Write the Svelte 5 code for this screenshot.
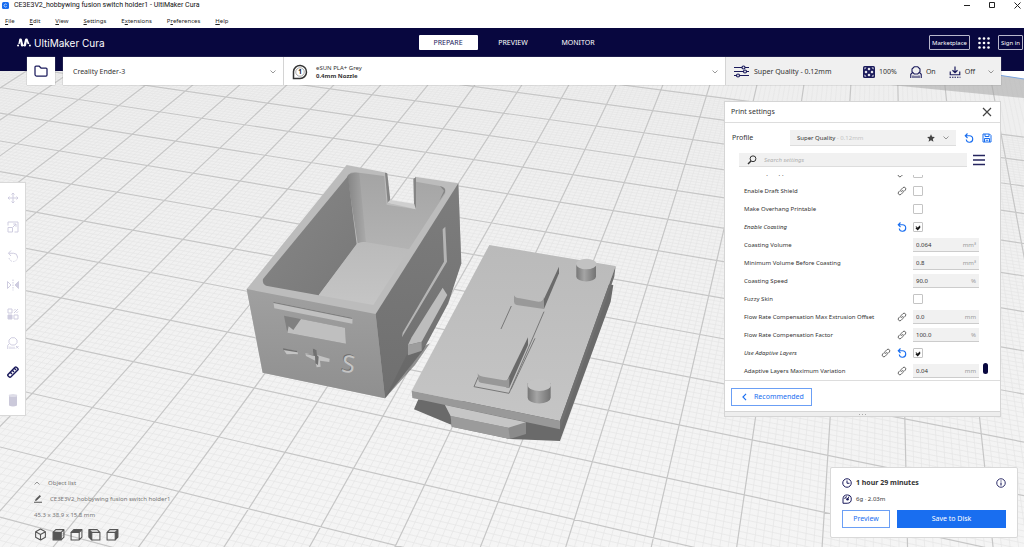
<script>
  const menus = ['File', 'Edit', 'View', 'Settings', 'Extensions', 'Preferences', 'Help'];
  const marks = [0, 0, 0, 0, 1, 1, 0];
  const stages = ['PREPARE', 'PREVIEW', 'MONITOR'];
  let stage = $state('PREPARE');

  let settings = $state([
    { label: 'Break Up Support In Chunks', type: 'check', value: false, link: true },
    { label: 'Enable Draft Shield', type: 'check', value: false, link: true },
    { label: 'Make Overhang Printable', type: 'check', value: false },
    { label: 'Enable Coasting', type: 'check', value: true, changed: true },
    { label: 'Coasting Volume', type: 'num', value: '0.064', unit: 'mm³' },
    { label: 'Minimum Volume Before Coasting', type: 'num', value: '0.8', unit: 'mm³' },
    { label: 'Coasting Speed', type: 'num', value: '90.0', unit: '%' },
    { label: 'Fuzzy Skin', type: 'check', value: false },
    { label: 'Flow Rate Compensation Max Extrusion Offset', type: 'num', value: '0.0', unit: 'mm', link: true },
    { label: 'Flow Rate Compensation Factor', type: 'num', value: '100.0', unit: '%', link: true },
    { label: 'Use Adaptive Layers', type: 'check', value: true, changed: true, link: true },
    { label: 'Adaptive Layers Maximum Variation', type: 'num', value: '0.04', unit: 'mm', link: true }
  ]);

  // Build plate grid: two pencils of lines that meet on the same horizon.
  const horizon = -480;
  const vpAcross = -3726;
  const vpDeep = 886;
  function across(n) {
    const k = 1 / (0.0012975 - 0.0000754 * (n - 3)) / (26 - vpAcross);
    return `M0 ${(horizon - k * vpAcross).toFixed(1)}L1024 ${(horizon + k * (1024 - vpAcross)).toFixed(1)}`;
  }
  function deep(m) {
    const k = 0.021 + 0.0832 * m;
    return `M${(vpDeep + 540 * k).toFixed(1)} 60L${(vpDeep + 1040 * k).toFixed(1)} 560`;
  }
  let major = '';
  let minor = '';
  for (let i = -70; i <= 90; i++) {
    if (i % 10 === 0) major += across(i / 10);
    else minor += across(i / 10);
  }
  for (let i = -200; i <= 30; i++) {
    if (i % 10 === 0) major += deep(i / 10);
    else minor += deep(i / 10);
  }
</script>

{#snippet linkIcon()}
  <svg class="i10" viewBox="0 0 20 20" fill="none" stroke="#555" stroke-width="1.8" stroke-linecap="round">
    <path d="M8.5 11.5a3.4 3.4 0 0 1 0-4.8l3.4-3.4a3.4 3.4 0 0 1 4.8 4.8l-2.2 2.2M11.5 8.5a3.4 3.4 0 0 1 0 4.8l-3.4 3.4a3.4 3.4 0 0 1-4.8-4.8l2.2-2.2" />
  </svg>
{/snippet}
{#snippet resetIcon()}
  <svg class="i10" viewBox="0 0 20 20" fill="none" stroke="#196ef0" stroke-width="2.2">
    <path d="M2.500 5.500H11a6.500 6.500 0 1 1-6.500 7.500M7 1L2.500 5.500 7 10" />
  </svg>
{/snippet}
{#snippet chevron()}
  <svg class="chev" viewBox="0 0 12 8" fill="none" stroke="#777" stroke-width="1.5"><path d="M1 1l5 5 5-5" /></svg>
{/snippet}

<div class="app">
  <div class="titlebar">
    <svg class="i7" viewBox="0 0 14 14"><rect width="14" height="14" rx="3" fill="#196ef0" /><path d="M9.500 5A3 3 0 1 0 9.500 9" fill="none" stroke="#fff" stroke-width="1.300" /></svg>
    <h1>CE3E3V2_hobbywing fusion switch holder1 - UltiMaker Cura</h1>
    <div class="winbtns">
      <button aria-label="Minimize"><svg viewBox="0 0 7 7"><path d="M0 3.500h6" /></svg></button>
      <button aria-label="Maximize"><svg viewBox="0 0 7 7"><path d="M.5 .5h5v5h-5z" /></svg></button>
      <button aria-label="Close"><svg viewBox="0 0 7 7"><path d="M.5.5l6 6M6.500.5l-6 6" /></svg></button>
    </div>
  </div>
  <nav class="menubar">
    {#each menus as m, i}
      <button>{m.slice(0, marks[i])}<u>{m[marks[i]]}</u>{m.slice(marks[i] + 1)}</button>
    {/each}
  </nav>

  <header>
    <div class="logo">
      <svg viewBox="0 0 26 16" fill="#fff"><circle cx="2" cy="13.500" r="1.900" /><circle cx="24" cy="13.500" r="1.900" /><path d="M4 2.500q0-2 2-2h1q1.600 0 2 1.600L11.500 12h1L15 2.100Q15.400.5 17 .5h1q2 0 2 2L23 11h-3.500L18.300 6l-1.500 7.500q-.4 2-2.300 2h-.5q-1.500 0-2-1.500-.5 1.500-2 1.500h-.5q-1.900 0-2.300-2L6 6 5 11H2.500z" /></svg>
      <span>UltiMaker Cura</span>
    </div>
    <nav class="stages">
      {#each stages as s}
        <button class:active={stage === s} onclick={() => (stage = s)}>{s}</button>
      {/each}
    </nav>
    <div class="account">
      <button class="outlined">Marketplace</button>
      <button class="apps" aria-label="Applications">
        <svg viewBox="0 0 24 24" fill="#fff">
          {#each [3, 12, 21] as y}{#each [3, 12, 21] as x}<circle cx={x} cy={y} r="2.600" />{/each}{/each}
        </svg>
      </button>
      <button class="outlined">Sign in</button>
    </div>
  </header>

  <div class="stage">
    <svg class="scene" viewBox="0 71 1024 476" preserveAspectRatio="xMidYMid slice" aria-hidden="true">
      <defs>
        <linearGradient id="plate" x1="0" y1="0" x2="0" y2="1"><stop offset="0" stop-color="#eeeeee" /><stop offset="1" stop-color="#f5f5f5" /></linearGradient>
        <linearGradient id="front" x1="0" y1="0" x2="0" y2="1"><stop offset="0" stop-color="#a0a0a0" /><stop offset="1" stop-color="#8f8f8f" /></linearGradient>
        <linearGradient id="wall" x1="0" y1="0" x2="1" y2="1"><stop offset="0" stop-color="#888" /><stop offset="1" stop-color="#787878" /></linearGradient>
        <linearGradient id="side" x1="0" y1="0" x2="0" y2="1"><stop offset="0" stop-color="#7d7d7d" /><stop offset="1" stop-color="#6f6f6f" /></linearGradient>
        <linearGradient id="back" x1="0" y1="0" x2="0" y2="1"><stop offset="0" stop-color="#a4a4a4" /><stop offset="1" stop-color="#b3b3b3" /></linearGradient>
        <linearGradient id="floor" x1="0" y1="0" x2="0" y2="1"><stop offset="0" stop-color="#bababa" /><stop offset="1" stop-color="#c5c5c5" /></linearGradient>
        <linearGradient id="corner" x1="0" y1="0" x2="1" y2="0"><stop offset="0" stop-color="#858585" /><stop offset="1" stop-color="#aaaaaa" /></linearGradient>
        <linearGradient id="peg" x1="0" y1="0" x2="1" y2="0"><stop offset="0" stop-color="#777" /><stop offset=".4" stop-color="#a5a5a5" /><stop offset="1" stop-color="#727272" /></linearGradient>
      </defs>
      <rect y="60" width="1024" height="500" fill="url(#plate)" />
      <path d={minor} stroke="#e5e5e5" stroke-width=".7" fill="none" />
      <path d={major} stroke="#c6c6c6" stroke-width="1.200" fill="none" />
      <path d="M880 60V84L1024 98V60z" fill="#a6a6a6" opacity=".55" />
      <path d="M900 60L1024 79V60z" fill="#fff" />
      <path d="M900 60L1024 79" stroke="#7aa5e0" stroke-width="1" />

      <!-- open box -->
      <g transform="translate(230 150) scale(.3333)">
        <path d="M350 45L470 68 475 158 556 170 555 80 685 100 694 340 650 465 575 602 465 745 98 668 50 417z" fill="#bcbcbc" />
        <path d="M355 74Q362 66 375 67L463 78 470 164 558 178 558 95 630 108Q646 112 646 130L537 298 383 276z" fill="url(#back)" />
        <path d="M352 78Q362 66 388 69L408 276 383 280z" fill="url(#corner)" />
        <path d="M630 108Q650 112 645 127L628 152 642 122z" fill="#858585" />
        <path d="M354 78L380 282 266 436 108 407Q96 402 99 387z" fill="url(#wall)" />
        <path d="M380 284Q388 274 405 276L537 298 430 465 266 436z" fill="url(#floor)" />
        <path d="M465 68L472 70 481 150 473 158z" fill="#858585" />
        <path d="M473 158L481 150 556 162 558 178z" fill="#cfcfcf" />
        <path d="M550 86L558 82 558 178 552 160z" fill="#858585" />
        <path d="M50 417L437 492 465 745 98 668z" fill="url(#front)" />
        <path d="M685 100L694 340 655 460 580 600 465 745 437 492z" fill="url(#side)" />
        <path d="M530 615L600 580 555 645 465 745z" fill="#666" opacity=".7" />
        <path d="M638 238L646 230 651 335 516 562 518 548 642 335z" fill="#b5b5b5" />
        <path d="M638 413L652 435 648 468 575 602 538 615 534 585z" fill="#747474" />
        <path d="M638 413L652 435 575 575 534 585 545 562z" fill="#bdbdbd" />
        <path d="M534 585L575 575 575 602 534 616z" fill="#9d9d9d" />
        <path d="M130 455L368 503 367 521 133 475z" fill="#c0c0c0" /><path d="M130 455L368 503 367 507 130 459z" fill="#808080" />
        <path d="M162 497L345 533 348 581 172 548z" fill="#808080" />
        <path d="M213 507L345 533 348 581 172 548 176 529 190 540z" fill="#bfbfbf" />
        <path d="M159 596L202 604 204 613 190 612 170 613z" fill="#c4c4c4" /><path d="M159 595L202 603 202 607 160 600z" fill="#707070" />
        <path d="M248 595L260 600 261 615 299 626 298 636 270 632 272 650 260 652 256 632 228 618 226 610 250 614z" fill="#c2c2c2" />
        <path d="M248 595L260 600 261 616 266 620 264 645 256 640 255 618 226 612 250 614z" fill="#717171" />
        <text x="333" y="664" transform="rotate(8 350 640)" font-family="Noto Sans, sans-serif" font-size="72" fill="#6d6d6d">S</text>
        <text x="336" y="667" transform="rotate(8 350 640)" font-family="Noto Sans, sans-serif" font-size="72" fill="#c4c4c4">S</text>
      </g>

      <!-- lid -->
      <g transform="translate(400 230) scale(.3333)">
        <path d="M55 508L42 538 150 583 330 627 480 633 632 215 640 165 600 160 400 520z" fill="#6a6a6a" />
        <path d="M268 45L647 108 480 573 35 482z" fill="url(#floor)" />
        <path d="M35 482L480 573 480 598 37 504z" fill="#999" />
        <path d="M647 108L643 140 480 598 480 573z" fill="#707070" />
        <path d="M135 525L378 576 378 612 330 627 155 590 152 558z" fill="#8b8b8b" />
        <path d="M135 525L377 577 325 593 152 558z" fill="#c6c6c6" />
        <path d="M152 558L325 593 330 627 155 590z" fill="#9b9b9b" />
        <path d="M477 110L477 130 432 237 428 215z" fill="#6a6a6a" />
        <path d="M342 196Q346 205 360 205L415 215Q430 216 432 200L432 237 350 225Q342 222 342 215z" fill="#999" />
        <path d="M334 228L303 297M432 245L327 490 222 470 236 438M405 325L333 478" stroke="#777" stroke-width="3" fill="none" />
        <path d="M384 322L384 345 328 473 318 472 322 450z" fill="#696969" />
        <path d="M233 430Q238 440 250 440L312 451Q325 452 328 440L328 473 242 458Q235 456 235 450z" fill="#989898" />
        <path d="M529 103V140A29 14 0 0 0 588 140V103z" fill="url(#peg)" /><ellipse cx="559" cy="102" rx="31" ry="16" fill="#c2c2c2" />
        <path d="M383 460V503A34 17 0 0 0 452 503V460z" fill="url(#peg)" /><ellipse cx="418" cy="465" rx="35" ry="18" fill="#c4c4c4" />
      </g>
    </svg>

    <div class="stagebar">
      <button class="open" aria-label="Open file">
        <svg viewBox="0 0 28 24" fill="none" stroke="#1b1b5c" stroke-width="2.500" stroke-linejoin="round"><path d="M2 19V4q0-2 2-2h6l4 4h10q2 0 2 2v12q0 2-2 2H5q-3 0-3-3z" /></svg>
      </button>
      <div class="config">
        <button class="machine"><span>Creality Ender-3</span>{@render chevron()}</button>
        <button class="material">
          <svg class="i16" viewBox="0 0 32 32"><path d="M3 29V15A13 13 0 1 1 16 29z" fill="none" stroke="#333" stroke-width="3" /><circle cx="16" cy="16" r="8.500" fill="#fff" stroke="#555" stroke-width="1" /><text x="16" y="20.500" text-anchor="middle" font-size="13" font-weight="700" font-family="Noto Sans, sans-serif" fill="#222">1</text></svg>
          <span class="two"><span>eSUN PLA+ Grey</span><b>0.4mm Nozzle</b></span>
          {@render chevron()}
        </button>
        <button class="quality">
          <svg class="i15" viewBox="0 0 30 26" fill="none" stroke="#1b1b5c" stroke-width="2.400"><path d="M0 5h16M22 5h8M0 13h19M25 13h5M0 21h5M11 21h19" /><circle cx="19" cy="5" r="3" /><circle cx="22" cy="13" r="3" /><circle cx="8" cy="21" r="3" /></svg>
          <span class="grow">Super Quality - 0.12mm</span>
          <span class="stat">
            <svg class="i12" viewBox="0 0 24 24"><rect width="24" height="24" rx="3" fill="#1b1b5c" /><path d="M12 3l3 3-3 3-3-3zM12 15l3 3-3 3-3-3zM3 12l3-3 3 3-3 3zM15 12l3-3 3 3-3 3zM3 3h4L3 7zM21 3v4l-4-4zM3 21v-4l4 4zM21 21h-4l4-4z" fill="#fff" /></svg>100%</span>
          <span class="stat">
            <svg class="i12" viewBox="0 0 24 24" fill="none" stroke="#1b1b5c" stroke-width="2.200"><path d="M8.500 1.500h7l4.500 4.500v5.500L15.500 16h-7L4 11.500V6zM1.500 24v-7.500L5 13M22.500 24v-7.500L19 13M6 24v-5M10 24v-4.500M14 24v-4.500M18 24v-5" /></svg>On</span>
          <span class="stat">
            <svg class="i12" viewBox="0 0 24 24" fill="none" stroke="#1b1b5c" stroke-width="2.400"><path d="M12 1v12M7 8.500l5 5 5-5M2.500 11v6.500h19V11" /><path d="M1 22.500h22" stroke-dasharray="3 2" stroke-width="2" /></svg>Off</span>
          {@render chevron()}
        </button>
      </div>
    </div>

    <main>
      <div class="left">
        <div class="tools">
          <button aria-label="Move"><svg viewBox="0 0 24 24"><path d="M12 2v20M2 12h20M9 5l3-3 3 3M9 19l3 3 3-3M5 9l-3 3 3 3M19 9l3 3-3 3" /></svg></button>
          <button aria-label="Scale"><svg viewBox="0 0 24 24"><path d="M2 9V2h20v20h-7M2 13h9v9H2zM12 12l6-6M12.500 6H18v5.500" /></svg></button>
          <button aria-label="Rotate"><svg viewBox="0 0 24 24"><path d="M8 1L3 6.500 8 12M3 6.500h10a8 8 0 0 1 8 7.500" /><path d="M21 14A8.500 8.500 0 0 1 4 15" stroke-dasharray="3 2.500" /></svg></button>
          <button aria-label="Mirror"><svg viewBox="0 0 24 24"><path d="M1 5v14l7-7z" /><path d="M23 5v14l-7-7z" fill="#cfcde0" /><path d="M12 1v22" stroke-dasharray="3 2" /></svg></button>
          <button aria-label="Per model settings"><svg viewBox="0 0 24 24"><path d="M2 2h8v8H2zM14 14h8v8h-8z" /><path d="M2 14h8v8H2z" fill="#cfcde0" /><path d="M14 10l8-8M14 5l3-3M19 10l3-3" /></svg></button>
          <button aria-label="Support blocker"><svg viewBox="0 0 24 24"><path d="M8.500 1.500h7l4.500 4.500v5.500L15.500 16h-7L4 11.500V6zM1.500 24v-7.500L5 13M6 24v-5M10 24v-4.500M14 24v-4.500M18 18l5 5M23 18l-5 5" /></svg></button>
          <button aria-label="Measure" class="on"><svg viewBox="0 0 24 24"><path d="M2 17L16 2.500q1.500-1 3 0l2.500 2.500q1.500 1.500 0 3L7.500 22q-1.500 1-3 0L2 19.500q-1-1.300 0-2.500zM7 13l3 3M11 9l3 3M15 5l3 3" /></svg></button>
          <button aria-label="Cylinder"><svg viewBox="0 0 24 30"><path d="M4 5v20q8 4 16 0V5z" fill="#cbc9da" /><ellipse cx="12" cy="5" rx="8.500" ry="3" fill="#dedde8" /></svg></button>
        </div>
        <div class="objects">
          <button class="objlist"><svg class="chev" viewBox="0 0 12 8" fill="none" stroke="#777" stroke-width="1.500"><path d="M1 7l5-5 5 5" /></svg>Object list</button>
          <button class="objname"><svg class="i8" viewBox="0 0 16 16" fill="#555"><path d="M2 12l1-3.500L11.500 0l2.500 2.500L5.500 11zM0 13.500h16V15.500H0z" /></svg>CE3E3V2_hobbywing fusion switch holder1</button>
          <p>45.3 x 38.9 x 15.8 mm</p>
          <div class="views">
            <button aria-label="3D view"><svg viewBox="0 0 24 24"><path d="M12 2l9 5v10l-9 5-9-5V7zM3 7l9 5 9-5M12 12v10" /></svg></button>
            <button aria-label="Front view"><svg viewBox="0 0 24 24"><path d="M2 8l5-5h15v14l-5 5M17 8l5-5" /><path d="M2 8h15v14H2z" fill="#555" /></svg></button>
            <button aria-label="Top view"><svg viewBox="0 0 24 24"><path d="M2 8v14h15l5-5V3M17 8v14" /><path d="M2 8l5-5h15l-5 5z" fill="#555" /></svg></button>
            <button aria-label="Left view"><svg viewBox="0 0 24 24"><path d="M7 8h15v14H7L2 17V3h15l5 5" /><path d="M2 3l5 5v14l-5-5z" fill="#555" /></svg></button>
            <button aria-label="Right view"><svg viewBox="0 0 24 24"><path d="M17 8H2v14h15M2 8l5-5h15" /><path d="M17 8l5-5v14l-5 5z" fill="#555" /></svg></button>
          </div>
        </div>
      </div>

      <div class="right">
        <section class="panel">
          <div class="phead"><h2>Print settings</h2><button aria-label="Close settings"><svg class="i10" viewBox="0 0 10 10" stroke="#444" stroke-width="1.200"><path d="M1 1l8 8M9 1l-8 8" /></svg></button></div>
          <div class="profile">
            <span class="plabel">Profile</span>
            <button class="pick" aria-haspopup="listbox">
              <span>Super Quality <i>- 0.12mm</i></span>
              <svg class="i8" viewBox="0 0 16 16" fill="#444"><path d="M8 .5l2.300 5.100 5.500.5-4.200 3.700 1.300 5.500L8 12.400l-4.900 2.900 1.300-5.500L.2 6.100l5.500-.5z" /></svg>
              {@render chevron()}
            </button>
            <button aria-label="Discard changes">{@render resetIcon()}</button>
            <button aria-label="Save profile"><svg class="i10" viewBox="0 0 20 20" fill="none" stroke="#196ef0" stroke-width="2"><path d="M2 2h13l3 3v13H2zM6 2v5h8V2M5 18v-7h10v7M7.500 14.500h5" /></svg></button>
          </div>
          <div class="search">
            <label for="q" aria-label="Search settings"><svg class="i10" viewBox="0 0 20 20" fill="none" stroke="#333" stroke-width="2"><circle cx="12" cy="7.500" r="5.800" /><path d="M8 12l-6 6" stroke-width="2.800" /></svg></label>
            <input id="q" type="text" placeholder="Search settings" />
            <button aria-label="Setting visibility"><svg viewBox="0 0 12 12" stroke="#25255f" stroke-width="1.300"><path d="M0 1.500h12M0 6h12M0 10.500h12" /></svg></button>
          </div>
          <div class="listwrap">
            <div class="list">
              {#each settings as s, i}
                <div class="row">
                  <label for="s{i}" class:changed={s.changed}>{s.label}</label>
                  {#if s.link}{@render linkIcon()}{/if}
                  {#if s.changed}<button aria-label="Restore value">{@render resetIcon()}</button>{/if}
                  <span class="field">
                    {#if s.type === 'check'}
                      <input id="s{i}" type="checkbox" bind:checked={s.value} />
                    {:else}
                      <span class="num"><input id="s{i}" type="text" bind:value={s.value} /><em>{s.unit}</em></span>
                    {/if}
                  </span>
                </div>
              {/each}
            </div>
            <span class="thumb"></span>
          </div>
          <div class="pfoot">
            <button class="rec"><svg viewBox="0 0 8 12" fill="none" stroke="#196ef0" stroke-width="1.800"><path d="M6.500 1L1.500 6l5 5" /></svg>Recommended</button>
          </div>
          <div class="grip"><i></i><i></i><i></i></div>
        </section>

        <section class="job">
          <div class="line"><svg class="i10" viewBox="0 0 20 20" fill="none" stroke="#1b1b5c" stroke-width="2"><circle cx="10" cy="10" r="8.500" /><path d="M10 5v5.500h5" /></svg><b>1 hour 29 minutes</b>
            <button aria-label="Print time details"><svg class="i10" viewBox="0 0 20 20" fill="none" stroke="#1b1b5c" stroke-width="1.800"><circle cx="10" cy="10" r="8.500" /><path d="M10 9v6M10 5v2" stroke-width="2.200" /></svg></button></div>
          <div class="line small"><svg class="i10" viewBox="0 0 20 20" fill="none" stroke="#1b1b5c" stroke-width="2"><path d="M2 18.500V10a8.300 8.300 0 1 1 8.300 8.500zM10 5.500a4.500 4.500 0 0 0-4.500 4.500" /><circle cx="11" cy="10.500" r="2.500" fill="#1b1b5c" stroke="none" /><path d="M11 10l3-5" /></svg><span>6g · 2.03m</span></div>
          <div class="actions"><button class="prev">Preview</button><button class="save">Save to Disk</button></div>
        </section>
      </div>
    </main>
  </div>
</div>

<style>
  :global(body) { margin: 0; }
  .app { min-height: 100vh; display: flex; flex-direction: column; font: 6px/8px 'Noto Sans', 'Open Sans', sans-serif; color: #333; background: #fff; overflow: hidden; }
  button { font: inherit; color: inherit; background: none; border: 0; padding: 0; display: flex; align-items: center; }
  input { font: inherit; color: inherit; }
  h1, h2, p { margin: 0; font: inherit; }
  svg { display: block; flex: none; }
  .i7 { width: 7px; height: 7px; }
  .i8 { width: 8px; height: 8px; }
  .i10 { width: 10px; height: 10px; }
  .i12 { width: 12px; height: 12px; }
  .i15 { width: 15px; height: 13px; }
  .i16 { width: 16px; height: 16px; }
  .chev { width: 6px; height: 4px; }

  .titlebar { display: flex; align-items: center; height: 10px; padding-left: 2px; gap: 5px; color: #111; }
  .titlebar h1 { font: 7px/10px Roboto, sans-serif; }
  .winbtns { margin-left: auto; display: flex; gap: 18px; padding-right: 3px; }
  .winbtns svg { width: 7px; height: 7px; fill: none; stroke: #222; stroke-width: 1; }
  .menubar { display: flex; align-items: center; gap: 15px; height: 14px; padding: 4px 5px 0; color: #222; }

  header { background: #08073f; color: #fff; height: 29px; padding-bottom: 14px; display: grid; grid-template-columns: 1fr auto 1fr; align-items: center; }
  .logo { display: flex; align-items: center; gap: 3px; padding-left: 17px; font: 10px/14px Inter, sans-serif; }
  .logo svg { width: 14px; height: 9px; }
  .stages { display: flex; gap: 6px; padding-left: 2px; font-size: 7px; }
  .stages button { width: 59px; height: 15px; justify-content: center; border-radius: 1px; }
  .stages .active { background: #fff; color: #1b1b5c; }
  .account { display: flex; justify-content: flex-end; align-items: center; gap: 8px; padding-right: 1px; }
  .outlined { border: 1px solid #b8b7cc; height: 15px; padding: 0 2px; border-radius: 1px; }
  .apps svg { width: 12px; height: 12px; }

  .stage { position: relative; flex: 1; display: flex; flex-direction: column; }
  .scene { position: absolute; inset: 0; width: 100%; height: 100%; }
  .stagebar { position: relative; display: flex; gap: 8px; margin: -14px 23px 0 27px; height: 28px; font-size: 7px; }
  .open { width: 28px; background: #fff; justify-content: center; box-shadow: 0 0 1px #888; }
  .open svg { width: 14px; height: 12px; }
  .config { flex: 1; display: grid; grid-template-columns: 220fr 442fr 276fr; background: #fff; box-shadow: 0 0 1px #888; }
  .config > button { padding: 1px 7px 0 10px; text-align: left; }
  .machine span, .two, .grow { flex: 1; }
  .config .material { border-left: 1px solid #d4d4d4; gap: 8px; padding-left: 8px; font-size: 6px; }
  .two { display: flex; flex-direction: column; }
  .config .quality { background: #f0f0f0; border-left: 1px solid #d4d4d4; gap: 5px; padding-left: 8px; }
  .stat { display: flex; align-items: center; gap: 4px; margin-right: 8px; }

  main { position: relative; flex: 1; display: flex; justify-content: space-between; }
  .left, .right { display: flex; flex-direction: column; justify-content: space-between; }
  .tools { margin-top: 97px; width: 25px; background: #fff; border: 1px solid #d9d9d9; border-left: 0; display: flex; flex-direction: column; align-items: center; }
  .tools button { height: 29px; }
  .tools svg { width: 12px; height: 12px; fill: none; stroke: #cfcde0; stroke-width: 2; }
  .tools button:last-child svg { height: 15px; stroke: none; }
  .tools .on svg { stroke: #1b1b5c; stroke-width: 3; }
  .objects { padding: 0 0 6px 34px; color: #777; display: flex; flex-direction: column; gap: 8px; }
  .objects button { gap: 8px; }
  .views { display: flex; }
  .views button { width: 18px; height: 14px; }
  .views svg { width: 13px; height: 13px; fill: none; stroke: #555; stroke-width: 2; stroke-linejoin: round; }

  .right { align-items: flex-end; padding: 16px 6px 9px 0; }
  .panel { width: 275px; margin-right: 17px; background: #fff; border: 1px solid #d5d5d5; }
  .phead { display: flex; justify-content: space-between; align-items: center; height: 20px; padding: 0 8px 0 6px; border-bottom: 1px solid #ddd; font-size: 7px; }
  .profile { display: flex; align-items: center; gap: 8px; padding: 7px 8px 0 7px; height: 16px; }
  .plabel { flex: 1; font-size: 7px; }
  .pick { width: 166px; height: 16px; box-sizing: border-box; background: #f1f1f1; border-bottom: 1px solid #ddd; padding: 0 7px; gap: 8px; }
  .pick span { flex: 1; text-align: left; }
  .pick i { font-style: normal; color: #c4c4c4; }
  .search { display: flex; align-items: center; margin: 7px 15px 0 14px; }
  .search label { background: #f1f1f1; height: 13px; width: 25px; border-bottom: 1px solid #ddd; display: flex; align-items: center; justify-content: center; }
  .search input { flex: 1; min-width: 0; box-sizing: border-box; height: 14px; border: 0; border-bottom: 1px solid #ddd; background: #f1f1f1; padding: 0; font-style: italic; outline: 0; }
  .search input::placeholder { color: #b0b0b0; }
  .search button { margin-left: 6px; }
  .search svg:not(.i10) { width: 12px; height: 12px; }
  .listwrap { position: relative; margin-top: 8px; }
  .list { height: 205px; overflow: hidden; display: flex; flex-direction: column; justify-content: flex-end; padding-right: 21px; }
  .row { flex: none; height: 18px; display: flex; align-items: center; gap: 6px; padding-left: 19px; }
  .row label { flex: 1; }
  .changed { font-style: italic; }
  .field { width: 66px; }
  .num { display: flex; align-items: center; height: 14px; box-sizing: border-box; background: #f1f1f1; border-bottom: 1px solid #ccc; padding: 0 3px; }
  .num input { flex: 1; min-width: 0; width: 20px; border: 0; background: none; padding: 0; outline: 0; }
  .num em { font-style: normal; color: #999; }
  input[type='checkbox'] { appearance: none; display: block; width: 10px; height: 10px; margin: 0; border: 1px solid #c4c4c4; border-radius: 1px; background: #fff; }
  input[type='checkbox']:checked::after { content: ''; display: block; width: 4px; height: 3px; margin: 2px 0 0 2px; border: solid #111; border-width: 0 0 1px 1px; box-sizing: border-box; transform: rotate(-45deg); box-shadow: -1px 1px 0 #111; }
  .thumb { position: absolute; right: 12px; bottom: 6px; width: 5px; height: 11px; border-radius: 3px; background: #08073f; }
  .pfoot { border-top: 1px solid #ddd; padding: 7px 6px 5px; }
  .rec { border: 1px solid #6b9ff5; color: #196ef0; height: 18px; padding: 0 7px 0 10px; gap: 7px; font-size: 7px; }
  .rec svg { width: 5px; height: 8px; }
  .grip { height: 4px; background: #eee; border-top: 1px solid #d5d5d5; display: flex; gap: 2px; justify-content: center; align-items: center; }
  .grip i { width: 1px; height: 1px; background: #aaa; }

  .job { width: 164px; padding: 9px 11px 9px; background: #fff; border: 1px solid #d9d9d9; border-radius: 2px; }
  .line { display: flex; align-items: center; gap: 4px; height: 11px; font-size: 7px; }
  .line button { margin-left: auto; }
  .line.small { margin-top: 5px; font-size: 6px; }
  .actions { display: flex; gap: 7px; margin-top: 6px; font-size: 7px; }
  .actions button { height: 18px; justify-content: center; }
  .prev { width: 48px; border: 1px solid #6b9ff5; color: #196ef0; }
  .save { flex: 1; background: #196ef0; color: #fff; }
</style>
